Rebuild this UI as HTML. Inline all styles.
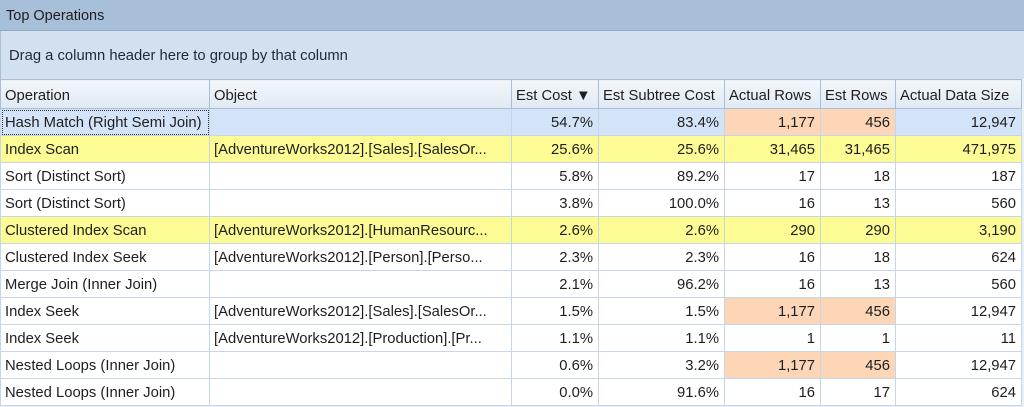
<!DOCTYPE html>
<html><head><meta charset="utf-8"><style>
*{margin:0;padding:0;box-sizing:border-box}
body{width:1024px;height:407px;overflow:hidden;background:#fff;font-family:"Liberation Sans",sans-serif;font-size:14.8px;color:#1e1e1e;position:relative}
.title{position:absolute;left:0;top:0;width:1024px;height:31px;background:#a8bfd9;border-bottom:1px solid #8fa9c6;padding:8px 0 0 6px;font-size:14.5px}
.group{position:absolute;left:0;top:31px;width:1024px;height:48px;background:#d3e0ef;border-left:1px solid #a8bfd9;padding:17px 0 0 8px;color:#1e2a3a}
.grid{position:absolute;left:0;top:79px;width:1024px;height:328px;background:#e9eff7}
table{border-collapse:collapse;table-layout:fixed;position:absolute;left:0;top:0;background:#fff}
td,th{height:27px;border:1px solid #c6d5e8;white-space:nowrap;overflow:hidden;padding:2px 4px 0;font-weight:normal}
th{height:29px;text-align:left;background:linear-gradient(#f2f6fb,#e0e9f4);border-color:#a9bdd6;padding-top:3px}
td.n{text-align:right;padding-right:5px}
tr.sel td{background:#d3e4f8}
tr.y td{background:#fdfb93}
td.o{background:#fcd6b6 !important}
.first{outline:1px dotted #333;outline-offset:-2px}
</style></head><body>
<div class="title">Top Operations</div>
<div class="group">Drag a column header here to group by that column</div>
<div class="grid">
<table>
<colgroup><col style="width:209px"><col style="width:302px"><col style="width:87px"><col style="width:126px"><col style="width:96px"><col style="width:75px"><col style="width:126px"></colgroup>
<tr><th>Operation</th><th>Object</th><th>Est Cost &#9660;</th><th>Est Subtree Cost</th><th>Actual Rows</th><th>Est Rows</th><th>Actual Data Size</th></tr>
<tr class="sel"><td class="first">Hash Match (Right Semi Join)</td><td></td><td class="n">54.7%</td><td class="n">83.4%</td><td class="n o">1,177</td><td class="n o">456</td><td class="n">12,947</td></tr>
<tr class="y"><td>Index Scan</td><td>[AdventureWorks2012].[Sales].[SalesOr...</td><td class="n">25.6%</td><td class="n">25.6%</td><td class="n">31,465</td><td class="n">31,465</td><td class="n">471,975</td></tr>
<tr><td>Sort (Distinct Sort)</td><td></td><td class="n">5.8%</td><td class="n">89.2%</td><td class="n">17</td><td class="n">18</td><td class="n">187</td></tr>
<tr><td>Sort (Distinct Sort)</td><td></td><td class="n">3.8%</td><td class="n">100.0%</td><td class="n">16</td><td class="n">13</td><td class="n">560</td></tr>
<tr class="y"><td>Clustered Index Scan</td><td>[AdventureWorks2012].[HumanResourc...</td><td class="n">2.6%</td><td class="n">2.6%</td><td class="n">290</td><td class="n">290</td><td class="n">3,190</td></tr>
<tr><td>Clustered Index Seek</td><td>[AdventureWorks2012].[Person].[Perso...</td><td class="n">2.3%</td><td class="n">2.3%</td><td class="n">16</td><td class="n">18</td><td class="n">624</td></tr>
<tr><td>Merge Join (Inner Join)</td><td></td><td class="n">2.1%</td><td class="n">96.2%</td><td class="n">16</td><td class="n">13</td><td class="n">560</td></tr>
<tr><td>Index Seek</td><td>[AdventureWorks2012].[Sales].[SalesOr...</td><td class="n">1.5%</td><td class="n">1.5%</td><td class="n o">1,177</td><td class="n o">456</td><td class="n">12,947</td></tr>
<tr><td>Index Seek</td><td>[AdventureWorks2012].[Production].[Pr...</td><td class="n">1.1%</td><td class="n">1.1%</td><td class="n">1</td><td class="n">1</td><td class="n">11</td></tr>
<tr><td>Nested Loops (Inner Join)</td><td></td><td class="n">0.6%</td><td class="n">3.2%</td><td class="n o">1,177</td><td class="n o">456</td><td class="n">12,947</td></tr>
<tr><td>Nested Loops (Inner Join)</td><td></td><td class="n">0.0%</td><td class="n">91.6%</td><td class="n">16</td><td class="n">17</td><td class="n">624</td></tr>
</table>
</div>
</body></html>
